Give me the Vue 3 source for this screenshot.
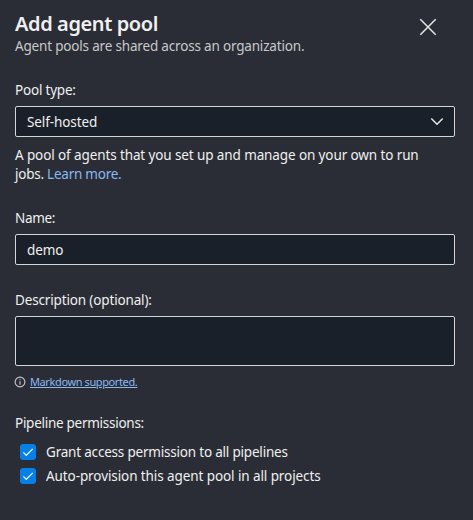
<template>
  <div class="panel">
    <header class="panel-header">
      <div class="heading">
        <h2 class="title">Add agent pool</h2>
        <p class="subtitle">Agent pools are shared across an organization.</p>
      </div>
      <button class="close-button" aria-label="Close">
        <svg width="18" height="18" viewBox="0 0 18 18">
          <path d="M1.3 1.3 16.7 16.7M16.7 1.3 1.3 16.7" />
        </svg>
      </button>
    </header>

    <div class="field">
      <span class="label">Pool type:</span>
      <button class="input dropdown">
        <span class="value">{{ poolType }}</span>
        <svg width="14" height="9" viewBox="0 0 14 9">
          <path d="M1.3 1.5 7 7.2 12.7 1.5" />
        </svg>
      </button>
      <p class="help">
        <span class="help-line">A pool of agents that you set up and manage on your own to run</span><br>
        <span class="help-jobs">jobs. <a class="link">Learn more.</a></span>
      </p>
    </div>

    <div class="field name-field">
      <label class="label label-name" for="pool-name">Name:</label>
      <input id="pool-name" v-model="name" class="input" type="text">
    </div>

    <div class="field description-field">
      <label class="label label-description" for="pool-description">Description (optional):</label>
      <textarea id="pool-description" v-model="description" class="input textarea"></textarea>
      <div class="markdown">
        <svg width="12" height="12" viewBox="0 0 12 12">
          <circle cx="6" cy="6" r="4.9" />
          <path d="M6 5.2V8.8M6 3.2V4.3" />
        </svg>
        <a class="markdown-link">Markdown supported.</a>
      </div>
    </div>

    <div class="permissions">
      <span class="label label-permissions">Pipeline permissions:</span>
      <div
        v-for="item in permissions"
        :key="item.id"
        class="checkbox-row"
        @click="item.checked = !item.checked"
      >
        <span class="checkbox" :class="{ checked: item.checked }">
          <svg v-if="item.checked" width="16" height="16" viewBox="0 0 16 16">
            <path d="M3.3 8.4 6.3 11.3 12.7 4.9" />
          </svg>
        </span>
        <span class="checkbox-label" :class="item.id">{{ item.text }}</span>
      </div>
    </div>
  </div>
</template>

<script setup>
import { ref } from 'vue'

const poolType = ref('Self-hosted')
const name = ref('demo')
const description = ref('')

const permissions = ref([
  { id: 'grant', text: 'Grant access permission to all pipelines', checked: true },
  { id: 'provision', text: 'Auto-provision this agent pool in all projects', checked: true }
])
</script>

<style>
body {
  background: #2a2d35;
}
</style>

<style scoped>
.panel {
  box-sizing: border-box;
  height: 520px;
  padding: 11px 18px 0 15px;
  background: #2a2d35;
  color: #f0f0f0;
  font-family: "Noto Sans", "Open Sans", sans-serif;
  font-size: 13.5px;
  line-height: 20px;
  letter-spacing: -0.15px;
  white-space: nowrap;
}

svg {
  display: block;
  flex: none;
  fill: none;
  stroke: #e8e8e8;
  stroke-width: 1.5;
}

.panel-header {
  display: flex;
  justify-content: space-between;
  height: 69px;
}

.title {
  margin: 0;
  font-size: 20px;
  font-weight: 600;
  line-height: 26px;
  letter-spacing: -0.4px;
}

.subtitle {
  margin: -1px 0 0;
  color: #c8c9cb;
  letter-spacing: -0.18px;
}

.close-button {
  align-self: flex-start;
  margin: 7px 18px 0 0;
  padding: 0;
  border: 0;
  background: none;
  cursor: pointer;
}

.field {
  display: flex;
  flex-direction: column;
}

.label {
  display: block;
  align-self: flex-start;
  margin-bottom: 6px;
  letter-spacing: -0.2px;
}

.label-name {
  letter-spacing: -0.35px;
}

.label-description {
  letter-spacing: -0.15px;
}

.label-permissions {
  letter-spacing: -0.27px;
}

.input {
  box-sizing: border-box;
  width: 440px;
  height: 31px;
  margin: 0;
  padding: 0 11px;
  border: 1px solid #d4d5d6;
  border-radius: 2px;
  outline: none;
  background: #1a2029;
  color: #f0f0f0;
  font: inherit;
  letter-spacing: -0.1px;
}

.dropdown {
  display: flex;
  align-items: center;
  justify-content: space-between;
  padding-right: 10px;
  cursor: pointer;
}

.help {
  margin: 9px 0 0;
  line-height: 19px;
}

.help-line {
  letter-spacing: -0.11px;
}

.help-jobs {
  letter-spacing: -0.24px;
}

.link,
.markdown-link {
  color: #8ab8f2;
  cursor: pointer;
}

.name-field {
  margin-top: 24px;
}

.description-field {
  margin-top: 25px;
}

.textarea {
  height: 50px;
  resize: none;
}

.markdown {
  display: flex;
  align-items: center;
  gap: 4px;
  height: 16px;
  margin: 8px 0 0 -1px;
  font-size: 11px;
  line-height: 16px;
  letter-spacing: -0.39px;
}

.markdown svg {
  stroke: #c8c9cb;
  stroke-width: 1.1;
}

.markdown-link {
  text-decoration: underline;
}

.permissions {
  margin-top: 23px;
}

.permissions .label {
  width: max-content;
  margin-bottom: 7px;
}

.checkbox-row {
  display: flex;
  align-items: center;
  gap: 10px;
  height: 24px;
  padding-left: 5px;
  cursor: pointer;
}

.grant {
  letter-spacing: -0.2px;
}

.provision {
  letter-spacing: -0.09px;
}

.checkbox {
  box-sizing: border-box;
  width: 16px;
  height: 16px;
  border: 1px solid #d4d5d6;
  border-radius: 3px;
}

.checkbox.checked {
  border: 0;
  background: #0680e6;
}

.checkbox svg {
  stroke: #e6f2fc;
  stroke-width: 1.3;
}
</style>
